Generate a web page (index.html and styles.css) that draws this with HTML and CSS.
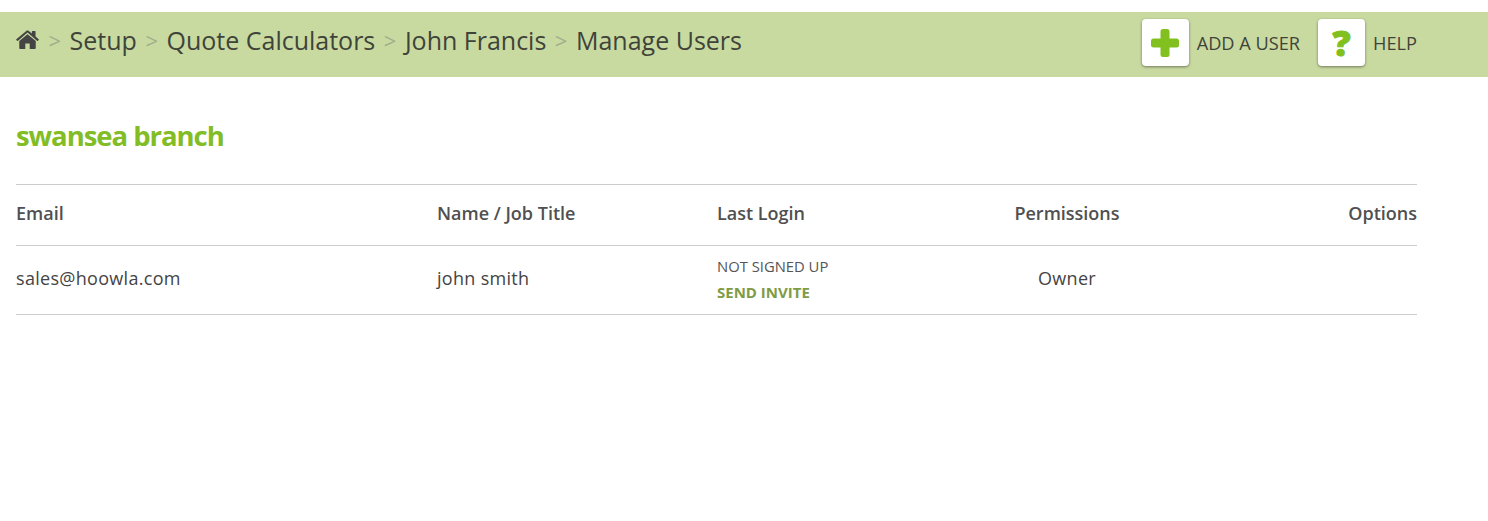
FILE: index.html
```html
<!DOCTYPE html>
<html lang="en">
<head>
    <meta charset="UTF-8">
    <title>Manage Users</title>
    <link rel="stylesheet" href="styles.css">
</head>
<body>
    <!-- Top bar -->
    <div class="top-bar">
        <div class="breadcrumb">
            <svg class="home-icon" viewBox="0 0 24 20" aria-label="Home">
                <path d="M12 3.900 3.400 11v7.600c0 .5.4.9.9.9h5.400v-5.800h4.600v5.800h5.400c.5 0 .9-.4.9-.9V11z"/>
                <path d="M23.700 9.100 20.400 6.400V1.200c0-.3-.2-.5-.5-.5h-2.800c-.3 0-.5.2-.5.5v2L13.300.5c-.8-.6-1.800-.6-2.600 0L.3 9.100c-.2.2-.2.500-.1.700l.9 1.100c.2.200.5.200.7.100L12 2.200l10.200 8.800c.2.100.5.100.7-.1l.9-1.100c.1-.2.1-.5-.1-.7z"/>
            </svg>
            <span class="sep">&gt;</span>
            <span class="crumb">Setup</span>
            <span class="sep">&gt;</span>
            <span class="crumb">Quote Calculators</span>
            <span class="sep">&gt;</span>
            <span class="crumb">John Francis</span>
            <span class="sep">&gt;</span>
            <span class="crumb">Manage Users</span>
        </div>
        <div class="actions">
            <div class="action">
                <span class="icon-box">
                    <svg class="plus-icon" viewBox="0 0 28 28">
                        <rect x="9.500" y="0" width="9" height="28" rx="2.500"/>
                        <rect x="0" y="9.500" width="28" height="9" rx="2.500"/>
                    </svg>
                </span>
                <span class="action-label">ADD A USER</span>
            </div>
            <div class="action">
                <span class="icon-box help-mark">?</span>
                <span class="action-label">HELP</span>
            </div>
        </div>
    </div>

    <div class="content">
        <h1 class="branch-title">swansea branch</h1>

        <table class="users-table">
            <thead>
                <tr>
                    <th class="col-email">Email</th>
                    <th class="col-name">Name / Job Title</th>
                    <th class="col-login">Last Login</th>
                    <th class="col-perm">Permissions</th>
                    <th class="col-options">Options</th>
                </tr>
            </thead>
            <tbody>
                <tr>
                    <td>sales@hoowla.com</td>
                    <td>john smith</td>
                    <td>
                        <div class="login-status">NOT SIGNED UP</div>
                        <a class="send-invite" href="#">SEND INVITE</a>
                    </td>
                    <td class="col-perm">Owner</td>
                    <td class="col-options"></td>
                </tr>
            </tbody>
        </table>
    </div>
</body>
</html>
```

FILE: styles.css
```css
* {
    box-sizing: border-box;
}

body {
    margin: 0;
    padding: 12px 0 0;
    font-family: "Open Sans", "Noto Sans", sans-serif;
    color: #444;
    background-color: #fff;
}

/* Top bar */
.top-bar {
    display: flex;
    align-items: flex-start;
    justify-content: space-between;
    height: 65px;
    padding: 0 71px 0 16px;
    background-color: #c9daa1;
}

.breadcrumb {
    display: flex;
    align-items: center;
    gap: 8.5px;
    height: 56px;
    font-size: 25px;
    color: #3f443a;
    white-space: nowrap;
}

.home-icon {
    width: 23px;
    height: 20px;
    fill: #444;
    margin-right: 1px;
}

.sep {
    color: #a3ae8b;
    font-size: 22px;
}

/* Right hand buttons */
.actions {
    display: flex;
    align-items: center;
    gap: 18px;
    padding-top: 7px;
}

.action {
    display: flex;
    align-items: center;
    gap: 8px;
}

.icon-box {
    display: flex;
    align-items: center;
    justify-content: center;
    width: 47px;
    height: 47px;
    background-color: #fff;
    border-radius: 4px;
    box-shadow: 0 1px 3px rgba(0, 0, 0, 0.45);
}

.plus-icon {
    width: 28px;
    height: 28px;
    fill: #82c020;
}

.help-mark {
    font-size: 36px;
    font-weight: 800;
    color: #82c020;
    -webkit-text-stroke: 1px #82c020;
}

.action-label {
    font-size: 18.2px;
    color: #3f443a;
}

/* Main content */
.content {
    padding: 0 71px 0 16px;
}

.branch-title {
    margin: 0;
    padding-top: 40px;
    height: 107px;
    font-size: 27.5px;
    line-height: 38px;
    font-weight: 700;
    letter-spacing: -1.05px;
    color: #83bd26;
}

/* Users table */
.users-table {
    width: 100%;
    table-layout: fixed;
    border-collapse: collapse;
    border-top: 1px solid #ccc;
}

.users-table th {
    height: 61px;
    padding: 0 0 4px;
    font-size: 18px;
    font-weight: 600;
    text-align: left;
    color: #505050;
    border-bottom: 1px solid #ccc;
}

.users-table td {
    height: 69px;
    padding: 0 0 4px;
    font-size: 18px;
    letter-spacing: 0.3px;
    color: #444;
    border-bottom: 1px solid #ccc;
}

.col-email {
    width: 421px;
}

.col-name {
    width: 280px;
}

.col-login {
    width: 200px;
}

.users-table .col-perm {
    width: 300px;
    text-align: center;
}

.users-table .col-options {
    width: 200px;
    text-align: right;
}

.login-status {
    margin-top: 2px;
    font-size: 14.8px;
    line-height: 20px;
    letter-spacing: 0;
    color: #555;
}

.send-invite {
    display: block;
    margin-top: 6px;
    font-size: 15px;
    line-height: 20px;
    font-weight: 700;
    letter-spacing: 0;
    color: #7f9c45;
    text-decoration: none;
}
```
